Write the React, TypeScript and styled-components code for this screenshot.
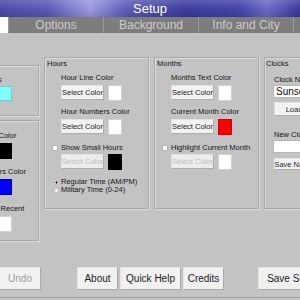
import React from "react";
import styled, { createGlobalStyle } from "styled-components";

const GlobalStyle = createGlobalStyle`
  html, body {
    margin: 0;
    padding: 0;
    background: #c3c3c3;
  }
  body {
    font-family: "Liberation Sans", Arial, sans-serif;
  }
`;

const Window = styled.div`
  width: 300px;
  height: 300px;
  overflow: hidden;
  background: #c3c3c3;
  display: flex;
  flex-direction: column;
`;

const TitleBar = styled.div`
  height: 17px;
  flex: none;
  display: flex;
  align-items: center;
  justify-content: center;
  color: #fff;
  font-size: 13px;
  background: linear-gradient(180deg, rgba(255, 255, 255, 0.16), rgba(255, 255, 255, 0) 55%, rgba(0, 0, 0, 0.12)),
    linear-gradient(90deg, #4a4aa6 0%, #5a5ab6 16%, #9a9ae0 30%, #5c5cb8 42%, #3c3c9c 62%, #4444a8 80%, #6a6ac6 89%, #38389a 100%);
`;

const TabBar = styled.div`
  height: 16px;
  flex: none;
  display: flex;
  margin-left: -86px;
  background: #7d7d7d;
`;

const Tab = styled.div<{ $active?: boolean }>`
  width: 94px;
  flex: none;
  border-right: 1px solid #9b9b9b;
  background: ${(p) => (p.$active ? "#ffffff" : "transparent")};
  color: #cbcbcb;
  font-size: 12px;
  display: flex;
  align-items: center;
  justify-content: center;
`;

const Body = styled.div`
  flex: none;
  display: flex;
  flex-direction: column;
  margin-left: -66px;
  padding-top: 24px;
`;

const Panels = styled.div`
  display: flex;
  align-items: flex-start;
  gap: 5px;
  height: 184px;
`;

const Column = styled.div`
  display: flex;
  flex-direction: column;
  gap: 4px;
  margin-top: 8px;
`;

const Group = styled.div<{ $h: number; $pad?: number }>`
  box-sizing: border-box;
  width: 105px;
  height: ${(p) => p.$h}px;
  flex: none;
  display: flex;
  flex-direction: column;
  align-items: flex-start;
  padding: 1px 0 0 ${(p) => p.$pad ?? 16}px;
  border: 1px solid #a9a9a9;
  box-shadow: inset 1px 1px 0 #dadada, 1px 1px 0 #dadada;
`;

const Title = styled.div<{ $shift?: number }>`
  font-size: 7.5px;
  line-height: 9px;
  color: #151515;
  margin-left: ${(p) => p.$shift ?? -14}px;
`;

const Label = styled.div<{ $mt: number }>`
  font-size: 7.5px;
  line-height: 9px;
  color: #151515;
  white-space: nowrap;
  margin-top: ${(p) => p.$mt}px;
`;

const Row = styled.div<{ $mt: number }>`
  display: flex;
  align-items: flex-start;
  gap: 4px;
  margin-top: ${(p) => p.$mt}px;
`;

const SmallButton = styled.div<{ $disabled?: boolean; $w?: number; $h?: number; $mt?: number }>`
  box-sizing: border-box;
  width: ${(p) => p.$w ?? 43}px;
  height: ${(p) => p.$h ?? 15}px;
  margin-top: ${(p) => p.$mt ?? 0}px;
  display: flex;
  align-items: center;
  justify-content: center;
  font-size: 7.5px;
  white-space: nowrap;
  color: ${(p) => (p.$disabled ? "#bdbdbd" : "#1c1c1c")};
  background: ${(p) => (p.$disabled ? "#ececec" : "#f3f3f3")};
  border: 1px solid #e2e2e2;
  border-right-color: #acacac;
  border-bottom-color: #acacac;
`;

const Swatch = styled.div<{ $color: string; $h?: number }>`
  box-sizing: border-box;
  width: 14px;
  height: ${(p) => p.$h ?? 16}px;
  background: ${(p) => p.$color};
  border: 1px solid rgba(0, 0, 0, 0.18);
`;

const CheckRow = styled.div<{ $mt: number }>`
  display: flex;
  align-items: center;
  gap: 4px;
  margin-left: -8px;
  margin-top: ${(p) => p.$mt}px;
  font-size: 7.5px;
  line-height: 9px;
  color: #151515;
  white-space: nowrap;
`;

const CheckBox = styled.span`
  box-sizing: border-box;
  width: 4px;
  height: 4px;
  background: #fff;
  box-shadow: 0 0 0 0.5px #a0a0a0;
`;

const RadioRow = styled.div<{ $mt?: number }>`
  display: flex;
  align-items: center;
  gap: 3px;
  margin-left: -6px;
  margin-top: ${(p) => p.$mt ?? 0}px;
  font-size: 7.5px;
  line-height: 8px;
  color: #151515;
  white-space: nowrap;
`;

const Radio = styled.span<{ $on?: boolean }>`
  width: 3px;
  height: 3px;
  border-radius: 50%;
  background: ${(p) => (p.$on ? "radial-gradient(circle, #222 0 45%, #fff 55%)" : "#fff")};
`;

const TextInput = styled.div<{ $mt: number }>`
  box-sizing: border-box;
  width: 80px;
  height: 13px;
  margin-top: ${(p) => p.$mt}px;
  margin-left: -1px;
  padding-left: 2px;
  background: #fff;
  border: 1px solid #b5b5b5;
  font-size: 10px;
  line-height: 11px;
  color: #111;
  white-space: nowrap;
`;

const ButtonRow = styled.div`
  display: flex;
  gap: 2px;
  margin-top: 26px;
  padding-left: 22px;
`;

const Spacer = styled.div<{ $w: number }>`
  width: ${(p) => p.$w}px;
  flex: none;
`;

const BigButton = styled.div<{ $w: number; $disabled?: boolean }>`
  box-sizing: border-box;
  width: ${(p) => p.$w}px;
  height: 23px;
  flex: none;
  display: flex;
  align-items: center;
  justify-content: center;
  font-size: 10px;
  white-space: nowrap;
  color: ${(p) => (p.$disabled ? "#9d9d9d" : "#1c1c1c")};
  background: #f1f1f1;
  border: 1px solid #e4e4e4;
  border-right-color: #a8a8a8;
  border-bottom-color: #a8a8a8;
`;

const BottomEdge = styled.div`
  height: 1px;
  flex: none;
  background: #a2a2a2;
  margin-top: 7px;
`;

const ColorField: React.FC<{ label: string; color: string; mt: number; disabled?: boolean }> = ({ label, color, mt, disabled }) => (
  <>
    <Label $mt={mt}>{label}</Label>
    <Row $mt={3}>
      <SmallButton $disabled={disabled}>Select Color</SmallButton>
      <Swatch $color={color} />
    </Row>
  </>
);

const App: React.FC = () => {
  return (
    <Window>
      <GlobalStyle />
      <TitleBar>Setup</TitleBar>
      <TabBar>
        <Tab $active>Colors</Tab>
        <Tab>Options</Tab>
        <Tab>Background</Tab>
        <Tab>Info and City</Tab>
        <Tab>Extras</Tab>
      </TabBar>
      <Body>
        <Panels>
          <Column>
            <Group $h={51}>
              <Label $mt={8}>Shadow Colors</Label>
              <Row $mt={2}>
                <SmallButton>Select Color</SmallButton>
                <Swatch $color="#80ffff" $h={15} />
              </Row>
            </Group>
            <Group $h={121}>
              <ColorField label="Second Hand Color" color="#000000" mt={9} />
              <ColorField label="Minute Numbers Color" color="#0000ff" mt={8} />
              <ColorField label="Highlight Most Recent" color="#ffffff" mt={9} />
            </Group>
          </Column>
          <Group $h={152}>
            <Title>Hours</Title>
            <ColorField label="Hour Line Color" color="#ffffff" mt={5} />
            <ColorField label="Hour Numbers Color" color="#ffffff" mt={6} />
            <CheckRow $mt={8}>
              <CheckBox />
              Show Small Hours
            </CheckRow>
            <Row $mt={2}>
              <SmallButton $disabled>Select Color</SmallButton>
              <Swatch $color="#000000" />
            </Row>
            <RadioRow $mt={8}>
              <Radio $on />
              Regular Time (AM/PM)
            </RadioRow>
            <RadioRow>
              <Radio />
              Military Time (0-24)
            </RadioRow>
          </Group>
          <Group $h={152}>
            <Title>Months</Title>
            <ColorField label="Months Text Color" color="#ffffff" mt={5} />
            <ColorField label="Current Month Color" color="#ff0000" mt={6} />
            <CheckRow $mt={8}>
              <CheckBox />
              Highlight Current Month
            </CheckRow>
            <Row $mt={2}>
              <SmallButton $disabled>Select Color</SmallButton>
              <Swatch $color="#ffffff" />
            </Row>
          </Group>
          <Group $h={152} $pad={9}>
            <Title $shift={-8}>Clocks</Title>
            <Label $mt={7}>Clock Name</Label>
            <TextInput $mt={1}>Sunset</TextInput>
            <SmallButton $w={40} $h={14} $mt={4}>
              Load
            </SmallButton>
            <Label $mt={14}>New Clock Name</Label>
            <TextInput $mt={1}></TextInput>
            <SmallButton $w={40} $h={12} $mt={5}>
              Save Name
            </SmallButton>
          </Group>
        </Panels>
        <ButtonRow>
          <BigButton $w={41}>Reset</BigButton>
          <BigButton $w={42} $disabled>
            Undo
          </BigButton>
          <Spacer $w={32} />
          <BigButton $w={41}>About</BigButton>
          <BigButton $w={61}>Quick Help</BigButton>
          <BigButton $w={41}>Credits</BigButton>
          <Spacer $w={30} />
          <BigButton $w={80}>Save Settings</BigButton>
        </ButtonRow>
        <BottomEdge />
      </Body>
    </Window>
  );
};

export default App;
